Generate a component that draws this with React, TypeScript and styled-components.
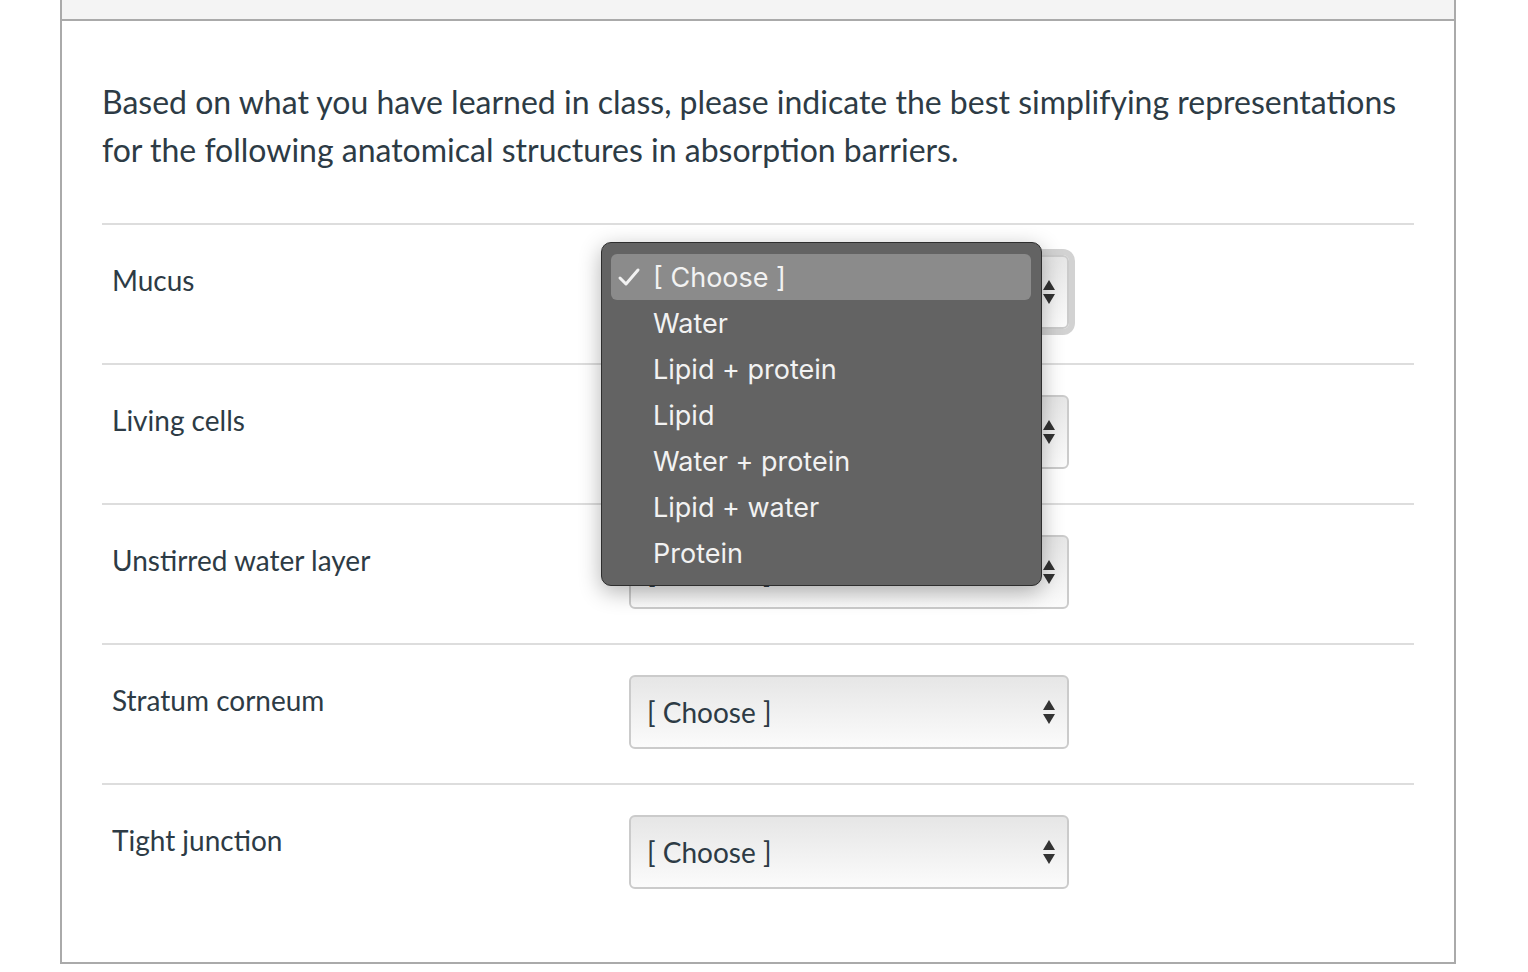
import React, { ReactElement } from 'react';
import styled, { createGlobalStyle } from 'styled-components';

const GlobalStyle = createGlobalStyle`
  html, body {
    margin: 0;
    padding: 0;
    background: #ffffff;
  }
  body {
    font-family: Lato, "Helvetica Neue", Arial, sans-serif;
    color: #2d3b45;
  }
`;

const Card = styled.section`
  margin-left: 60px;
  width: 1396px;
  box-sizing: border-box;
  border: solid 2px #aaaaaa;
  border-top: none;
`;

const CardHeader = styled.div`
  height: 19px;
  background: #f4f4f4;
  border-bottom: solid 2px #aaaaaa;
`;

const CardBody = styled.div`
  padding: 57px 40px 39px 40px;
`;

const Prompt = styled.p`
  margin: 0 0 49px 0;
  font-size: 32px;
  line-height: 48px;
  color: #2d3b45;
`;

const Row = styled.div`
  display: grid;
  grid-template-columns: 527px 440px;
  height: 140px;
  box-sizing: border-box;
  padding-top: 30px;
  border-top: solid 2px #dddddd;
  position: relative;
`;

const Label = styled.div`
  padding: 0 0 0 10px;
  font-size: 28px;
  line-height: 42px;
  margin-top: 4px;
`;

const SelectBox = styled.div<{ $focused?: boolean }>`
  position: relative;
  display: flex;
  align-items: center;
  justify-content: space-between;
  height: 74px;
  box-sizing: border-box;
  padding: 0 12px 0 16px;
  border: solid 2px #cbcbcb;
  border-radius: 6px;
  background: linear-gradient(#e6e6e6, #fbfbfb);
  font-size: 28px;
  color: #2d3b45;
  box-shadow: ${(p) => (p.$focused ? '0 0 0 6px #d2d2d2' : 'none')};
`;

const Arrows = styled.svg`
  width: 12px;
  height: 26px;
  flex: none;
`;

const Popup = styled.ul`
  position: absolute;
  left: 499px;
  top: 17px;
  width: 441px;
  height: 344px;
  box-sizing: border-box;
  margin: 0;
  padding: 11px 10px 0 9px;
  list-style: none;
  background: #636363;
  border: solid 1px #2e2e2e;
  border-radius: 10px;
  box-shadow: 0 6px 22px rgba(0, 0, 0, 0.3);
  z-index: 5;
  font-family: Inter, "Helvetica Neue", Arial, sans-serif;
`;

const Option = styled.li<{ $active?: boolean }>`
  display: flex;
  align-items: center;
  height: 46px;
  border-radius: 6px;
  padding-left: 6px;
  background: ${(p) => (p.$active ? '#8b8b8b' : 'transparent')};
  color: #f2f2f2;
  font-size: 27px;
`;

const Check = styled.span`
  width: 36px;
  flex: none;
  display: flex;
  align-items: center;
`;

const rows = ['Mucus', 'Living cells', 'Unstirred water layer', 'Stratum corneum', 'Tight junction'];
const options = ['[ Choose ]', 'Water', 'Lipid + protein', 'Lipid', 'Water + protein', 'Lipid + water', 'Protein'];

function UpDown(): ReactElement {
  return (
    <Arrows viewBox="0 0 12 26">
      <path d="M6 1 L12 11 L0 11 Z" fill="#333" />
      <path d="M0 15 L12 15 L6 25 Z" fill="#333" />
    </Arrows>
  );
}

function App(): ReactElement {
  return (
    <>
      <GlobalStyle />
      <Card>
        <CardHeader />
        <CardBody>
          <Prompt>
            Based on what you have learned in class, please indicate the best simplifying representations for the
            following anatomical structures in absorption barriers.
          </Prompt>
          {rows.map((label, i) => (
            <Row key={label}>
              <Label>{label}</Label>
              <SelectBox $focused={i === 0}>
                <span>[ Choose ]</span>
                <UpDown />
              </SelectBox>
              {i === 0 && (
                <Popup>
                  {options.map((opt, j) => (
                    <Option key={opt} $active={j === 0}>
                      <Check>
                        {j === 0 && (
                          <svg width="24" height="20" viewBox="0 0 24 20">
                            <path d="M3 11 L9 17 L21 3" fill="none" stroke="#f2f2f2" strokeWidth="3" strokeLinecap="round" strokeLinejoin="round" />
                          </svg>
                        )}
                      </Check>
                      {opt}
                    </Option>
                  ))}
                </Popup>
              )}
            </Row>
          ))}
        </CardBody>
      </Card>
    </>
  );
}

export default App;
